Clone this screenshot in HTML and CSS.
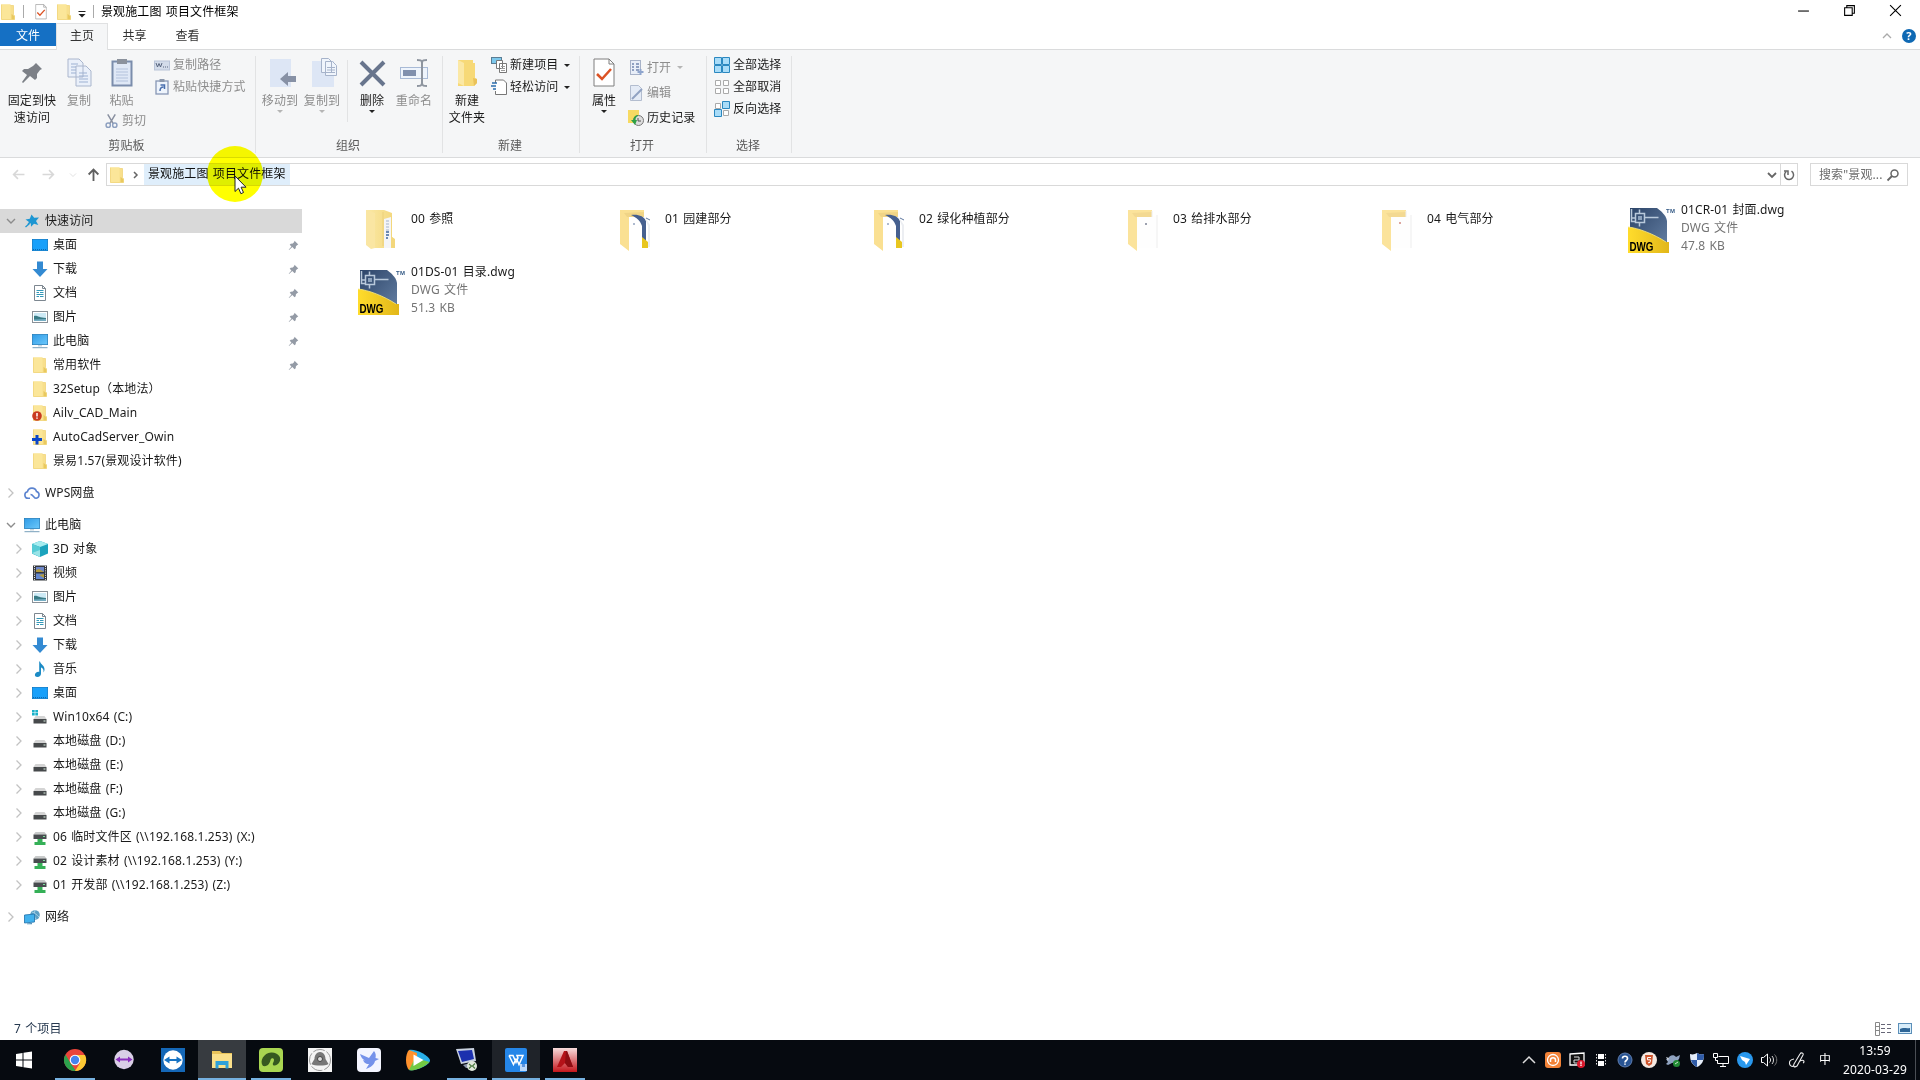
FILE: index.html
```html
<!DOCTYPE html>
<html lang="zh-CN">
<head>
    <meta charset="UTF-8">
    <meta name="viewport" content="width=device-width, initial-scale=1.0">
    <title>景观施工图 项目文件框架</title>
    <link rel="stylesheet" href="styles.css">
</head>
<body>

<svg class="sprite" width="0" height="0">
    <defs>
        <linearGradient id="g-screen" x1="0" y1="0" x2="1" y2="1"><stop offset="0" stop-color="#2f9be6"/><stop offset="1" stop-color="#6cc8fb"/></linearGradient>
        <linearGradient id="g-dwg" x1="0" y1="0" x2="1" y2="1"><stop offset="0" stop-color="#2c4468"/><stop offset="1" stop-color="#6580a4"/></linearGradient>
        <linearGradient id="g-gold" x1="0" y1="0" x2="1" y2="0"><stop offset="0" stop-color="#ffdc2c"/><stop offset="1" stop-color="#e2b71a"/></linearGradient>
        <linearGradient id="g-fold" x1="0" y1="0" x2="1" y2="0"><stop offset="0" stop-color="#fbe9a6"/><stop offset="1" stop-color="#f3d77c"/></linearGradient>
        <linearGradient id="g-red" x1="0" y1="0" x2="0" y2="1"><stop offset="0" stop-color="#f7dcdc"/><stop offset="1" stop-color="#c4161c"/></linearGradient>
    </defs>
    <symbol id="folder" viewBox="0 0 16 16"><path d="M1.5 0.5h9v1h3v10l1 .5v3.500h-13z" fill="#f8df8c"/><path d="M1.500 .5h9v15h-9z" fill="#fbe699"/><path d="M11.500 10l3 2v3.500h-3z" fill="#e9c95f"/><path d="M1.500 .5v15h13v-4l-1-1v-9h-3" fill="none" stroke="#efd170" stroke-width=".7"/></symbol>
    <symbol id="pin" viewBox="0 0 16 16"><path d="M9.500 1l5.500 5.500-1.500.6-2 2-.3 3-1.700 1.400-3.200-3.200L1.500 14.500 1 14.200l4-4.700L2.500 7 4 5.300l3-.3 2-2z" fill="#949ba6"/></symbol>
    <symbol id="star" viewBox="0 0 16 16"><path d="M7.500 1.500l2.700 3.200 4.800-.3-3 3.600 2.300 4-4.300-1.300-3 3-.2-3.500L3 11.500 5 9 1.500 6.500l4.300-.8z" fill="#1d96d2"/><path d="M5.500 10.500L1.500 14" stroke="#1d96d2" stroke-width="1.300"/></symbol>
    <symbol id="desktop" viewBox="0 0 16 16"><rect x=".4" y="2.400" width="15.200" height="11.200" fill="#18a0fa" stroke="#0878c8" stroke-width=".8"/><path d="M1 12.600h14" stroke="#0a64aa" stroke-dasharray="1 1"/></symbol>
    <symbol id="down" viewBox="0 0 16 16"><path d="M5 .5h6v7.500h4.500L8 16 .5 8H5z" fill="#338ad2"/></symbol>
    <symbol id="doc" viewBox="0 0 16 16"><path d="M2.500.5h8l3 3v12h-11z" fill="#fff" stroke="#7d8790"/><path d="M10.500.5v3h3" fill="none" stroke="#7d8790"/><path d="M4.500 5.500h7M4.500 7.500h2.500M8 7.500h3.500M4.500 9.500h7M4.500 11.500h2.500M8 11.500h3.500" stroke="#3498b8"/></symbol>
    <symbol id="picture" viewBox="0 0 16 16"><rect x=".5" y="2.500" width="15" height="11" fill="#fff" stroke="#8a9198"/><path d="M2 4h12v8H2z" fill="#cdeaf6"/><path d="M2 7c3-1 5 2 12 2v3H2z" fill="#397b86"/><path d="M2 10.500l12-.5v2H2z" fill="#75adc3"/></symbol>
    <symbol id="pc" viewBox="0 0 16 16"><rect x=".4" y="1.400" width="15.200" height="10.200" fill="url(#g-screen)" stroke="#2680bd" stroke-width=".8"/><path d="M6 12h4v1.500H6z" fill="#c8d6df"/><path d="M.5 14.700h15" stroke="#779fba" stroke-width="1"/></symbol>
    <symbol id="folder-alert" viewBox="0 0 16 16"><use href="#folder"/><circle cx="5" cy="11" r="4.800" fill="#c83a20"/><path d="M5 8v3.500M5 12.500v1.200" stroke="#fff" stroke-width="1.500"/></symbol>
    <symbol id="folder-plus" viewBox="0 0 16 16"><use href="#folder"/><path d="M3.500 6h3v3h3.500v3H6.500v3.500h-3V12H0V9h3.500z" fill="#0b46c8"/></symbol>
    <symbol id="cloud" viewBox="0 0 16 16"><path d="M6 13.300H4a3.300 3.300 0 0 1-.6-6.500A4.700 4.700 0 0 1 12.500 6.500a3.500 3.500 0 0 1-.3 6.800c-2.500 0-3-4-5.700-3.800" fill="none" stroke="#5b83cf" stroke-width="1.600"/></symbol>
    <symbol id="cube" viewBox="0 0 16 16"><path d="M8 0l8 3v9.500L8 16l-8-3.500V3z" fill="#1ba3bd"/><path d="M0 3l8-3 8 3-8 3z" fill="#a6ecef"/><path d="M0 3l8 3v10l-8-3.500z" fill="#56cbd5"/><path d="M0 12l8-3v7z" fill="#c4f3f3" opacity=".6"/></symbol>
    <symbol id="film" viewBox="0 0 16 16"><rect x="1" y=".5" width="14" height="15" fill="#35383d"/><path d="M4 2h8v5H4z" fill="#6d86c8"/><path d="M4 8.500h8V14H4z" fill="#6387d0"/><path d="M4 5l3-1 5 3H4zM7 10l5-1v4z" fill="#b39a3d"/><path d="M2.500 1v14M13.500 1v14" stroke="#eee" stroke-dasharray="1 1.200"/></symbol>
    <symbol id="music" viewBox="0 0 16 16"><path d="M8 .5c.5 3 5 4 4.500 8.500-.1 1-.5 1.800-1 2.500.5-3-1-4.500-2.500-5v6c0 2-1.500 3.500-3.500 3.500s-3-1.300-2.500-2.700C3.500 11.500 5.500 10.500 7.200 11V.5z" fill="#1c8bc5"/></symbol>
    <symbol id="disk" viewBox="0 0 16 16"><path d="M3.500 7h9l2 3h-13z" fill="#d4d4d4"/><rect x="1.500" y="10" width="13" height="4.500" fill="#46494b"/><path d="M11.500 12h2" stroke="#d9f0e0"/></symbol>
    <symbol id="disk-win" viewBox="0 0 16 16"><use href="#disk"/><path d="M0 1h2.700v2.500H0zM3.300 1H6v2.500H3.300zM0 4h2.700v2.500H0zM3.300 4H6v2.500H3.300z" fill="#19b1c9"/></symbol>
    <symbol id="disk-net" viewBox="0 0 16 16"><path d="M3.500 3h9l2 2.500h-13z" fill="#c8caca"/><rect x="1.500" y="5.500" width="13" height="4.500" fill="#484c4f"/><path d="M11 7.500h2" stroke="#7be09c"/><path d="M5.500 10h5v3h3v3h-11v-3h3z" fill="#35b057"/></symbol>
    <symbol id="network" viewBox="0 0 16 16"><circle cx="11" cy="6" r="4.800" fill="#5c9fc4"/><path d="M8 3c3 1 5 3 7 5M11 1c-1 4-1 7 1 9" fill="none" stroke="#a5d1e8"/><path d="M.5 6l10-1v8l-10 1z" fill="#41b1ed" stroke="#1e70ab" stroke-width=".8"/><path d="M3 14.500l5-.5v1.300H3z" fill="#4c8eb8"/></symbol>
    <symbol id="chev-r" viewBox="0 0 10 10"><path d="M2.500.5L7 5 2.500 9.500" fill="none" stroke="#c2c2c2" stroke-width="1.300"/></symbol>
    <symbol id="chev-d" viewBox="0 0 10 10"><path d="M1 3l4 4 4-4" fill="none" stroke="#8c8c8c" stroke-width="1.400"/></symbol>
    <symbol id="sheet-check" viewBox="0 0 22 30"><path d="M1 1h15l5 5v22H1z" fill="#fff" stroke="#7e7e7e"/><path d="M16 1v5h5" fill="none" stroke="#7e7e7e"/><path d="M4 16l5 5 9-10" fill="none" stroke="#dc5325" stroke-width="2.500"/></symbol>
    <symbol id="dwg" viewBox="0 0 50 48">
        <path d="M3 2h27c4 3 9 7 10 13v28H3z" fill="url(#g-dwg)"/>
        <path d="M1 21c10 1 26 7 38 15h3v11H1z" fill="url(#g-gold)"/>
        <path d="M1 21c10 1 26 7 38 15" fill="none" stroke="#f8e983" stroke-width=".8"/>
        <path d="M4.500 3v9h4M12.500 3.500v4M4.500 12.500v3h4M8.500 7.500h9v9h-9zM17.500 11.500h14M12.500 16.500v4" fill="none" stroke="#b9c9db" stroke-width="1.500"/>
        <path d="M11 10h4v4h-4z" fill="#8da3bd"/>
    </symbol>
    <symbol id="folder-dwg" viewBox="0 0 50 48">
        <path d="M9 4h24v7H18v34l-9-7z" fill="#fae092"/>
        <path d="M13 7l20-1v5H16z" fill="#f0d486"/>
        <path d="M18 11h11l5 7v24H18z" fill="#fff"/>
        <path d="M20 9c7-1 13 1 15 6v22h-4V20c-2-6-5-8-11-11z" fill="#46608f"/>
        <path d="M31 31l6 5v6h-6z" fill="#e8c61f"/>
        <path d="M33 10l6 9v22h-2V20z" fill="#eceef2"/>
        <path d="M22 18h2M35 12l4 2" stroke="#5e779f"/>
    </symbol>
</svg>

<div class="title-bar">
    <svg class="i16"><use href="#folder"/></svg>
    <span class="t-sep"></span>
    <svg class="t-check" viewBox="0 0 22 30"><use href="#sheet-check"/></svg>
    <svg class="i16"><use href="#folder"/></svg>
    <svg class="t-more" viewBox="0 0 8 8"><path d="M.5 1.500h7" stroke="#222"/><path d="M.5 4h7L4 7.500z" fill="#222"/></svg>
    <span class="t-sep"></span>
    <span class="title">景观施工图 项目文件框架</span>
    <div class="window-buttons">
        <svg viewBox="0 0 12 12"><path d="M1 6.500h10" stroke="#000"/></svg>
        <svg viewBox="0 0 12 12"><path d="M1.500 3.500h7v7h-7zM3.500 3.500v-2h7v7h-2" fill="none" stroke="#000"/></svg>
        <svg viewBox="0 0 12 12"><path d="M1 1l10 10M11 1L1 11" stroke="#000"/></svg>
    </div>
</div>

<div class="tabs">
    <span class="tab file">文件</span>
    <span class="tab active">主页</span>
    <span class="tab">共享</span>
    <span class="tab">查看</span>
    <div class="help">
        <svg width="10" height="10" viewBox="0 0 10 10"><path d="M1 7l4-4 4 4" fill="none" stroke="#aaa" stroke-width="1.300"/></svg>
        <span class="help-mark">?</span>
    </div>
</div>

<div class="ribbon">
    <div class="group g-clip">
        <div class="group-body">
            <div class="big w64">
                <svg viewBox="0 0 30 30"><path d="M19 5l6 6-2 1-3 4v4l-2 2-5-4-7 7-1-1 5-7-5-4 2-2h4l5-3z" fill="#7c8087"/></svg>
                <span>固定到快</span><span>速访问</span>
            </div>
            <div class="big off w30">
                <svg viewBox="0 0 30 30"><path d="M4 1h11l4 4v14H4zM12 8h10l5 5v15H12z" fill="#eaf0fa" stroke="#aab6cd"/><path d="M7 6h7M7 9h5M7 12h5M7 15h5M15 15h8M15 18h9M15 21h9M15 24h9" stroke="#9db1d2"/></svg>
                <span>复制</span>
            </div>
            <div class="paste">
                <div class="big off">
                    <svg viewBox="0 0 30 30"><rect x="5.500" y="3.500" width="19" height="24" fill="#dfe8f6" stroke="#7b8dac" stroke-width="2"/><path d="M10 1h10v5H10z" fill="#8b929d"/><path d="M9 11h12M9 14h12M9 17h12M9 20h12M9 23h12" stroke="#b3c2dc"/></svg>
                    <span>粘贴</span>
                </div>
                <div class="small off cut">
                    <svg viewBox="0 0 16 16"><path d="M4 1l6 10M12 1L6 11" stroke="#8990a0" stroke-width="1.600"/><circle cx="4.500" cy="12.500" r="2.300" fill="none" stroke="#8c9fbf" stroke-width="1.500"/><circle cx="11.500" cy="12.500" r="2.300" fill="none" stroke="#8c9fbf" stroke-width="1.500"/></svg>
                    <span>剪切</span>
                </div>
            </div>
            <div class="smalls s-clip">
                <div class="small off"><svg viewBox="0 0 16 16"><rect x=".5" y="4" width="15" height="9" fill="#d3dcea" stroke="#b9c4d8"/><path d="M2 6l1.500 4L5 6.500 6.500 10 8 6M9 10h1M11 10h1M13 10h1" fill="none" stroke="#58657e"/></svg><span>复制路径</span></div>
                <div class="small off"><svg viewBox="0 0 16 16"><rect x="2" y="2" width="12" height="13" fill="#eef4fc" stroke="#8797b5" stroke-width="1.300"/><path d="M5.500 0h5v3h-5z" fill="#8c98ac"/><path d="M6 12c0-3 1-4 3.500-4M6.500 6h4v4" fill="none" stroke="#4a6fae" stroke-width="1.500"/></svg><span>粘贴快捷方式</span></div>
            </div>
        </div>
        <div class="group-label">剪贴板</div>
    </div>

    <div class="group g-org">
        <div class="group-body">
            <div class="big off w42">
                <svg viewBox="0 0 30 30"><path d="M5 1h21v28H5z" fill="#dde6f5"/><path d="M15 21l8-7v4h8v6h-8v4z" fill="#8791a5"/></svg>
                <span>移动到</span><i class="caret"></i>
            </div>
            <div class="big off w42">
                <svg viewBox="0 0 30 30"><path d="M5 3h22v26H5z" fill="#dde6f5"/><path d="M14.500.5h7l3 3v11h-10zM18.500 3.500h7l4 4v10h-11z" fill="#f0f5fc" stroke="#a6b3ca"/><path d="M20 9.500h8M20 12h8M20 14.500h8" stroke="#a6b3ca"/></svg>
                <span>复制到</span><i class="caret"></i>
            </div>
            <div class="thin-sep"></div>
            <div class="big w42">
                <svg viewBox="0 0 30 30"><path d="M4 4l23 23M27 4L4 27" stroke="#68758d" stroke-width="4"/></svg>
                <span>删除</span><i class="caret"></i>
            </div>
            <div class="big off w42">
                <svg viewBox="0 0 30 30"><rect x="1.500" y="9.500" width="27" height="11" fill="#eef4fc" stroke="#a8bad6"/><path d="M4 12h13v6H4z" fill="#8090ae"/><path d="M18 2c3 0 5 0 5 3v20c0 3-2 3-5 3M28 2c-3 0-5 0-5 3v20c0 3 2 3 5 3" fill="none" stroke="#8e959f" stroke-width="2"/></svg>
                <span>重命名</span>
            </div>
        </div>
        <div class="group-label">组织</div>
    </div>

    <div class="group g-new">
        <div class="group-body">
            <div class="big w42">
                <svg viewBox="0 0 30 30"><path d="M6 2h15v3h2v15l2 1v4l-3 3H6z" fill="#f7d977"/><path d="M6 2l6 3v23l-6-3z" fill="#fbe8a5"/><path d="M21 20l4 1v4l-3 3z" fill="#eac25a"/></svg>
                <span>新建</span><span>文件夹</span>
            </div>
            <div class="smalls">
                <div class="small"><svg viewBox="0 0 16 16"><rect x=".5" y=".5" width="10" height="6" fill="#7cc8ec" stroke="#5a7d94"/><path d="M5.500 3.500h6v8h-6zM8.500 6.500h7v9h-7z" fill="#fff" stroke="#777"/><path d="M10 9.500h4M10 11.500h4M10 13.500h4" stroke="#999"/></svg><span>新建项目</span><i class="caret"></i></div>
                <div class="small"><svg viewBox="0 0 16 16"><path d="M4.500 1h8l3 3v11.500h-11V12M4.500 1v3" fill="#fff" stroke="#777"/><path d="M1 4h5M0 7h5M2 10h3" stroke="#2c6fae" stroke-width="1.500"/></svg><span>轻松访问</span><i class="caret"></i></div>
            </div>
        </div>
        <div class="group-label">新建</div>
    </div>

    <div class="group g-open">
        <div class="group-body">
            <div class="big w46">
                <svg viewBox="0 0 22 30"><use href="#sheet-check"/></svg>
                <span>属性</span><i class="caret"></i>
            </div>
            <div class="smalls s-open">
                <div class="small off"><svg viewBox="0 0 16 16"><rect x="2.500" y=".5" width="10" height="14" fill="#e8eef8" stroke="#a7b2c8"/><path d="M4 4h2M4 7h2M4 10h2M8 4h3M8 7h3M8 10h3" stroke="#7287af" stroke-width="1.600"/><path d="M12.500 9v6M9.500 12h6" stroke="#8fa5cd" stroke-width="2"/></svg><span>打开</span><i class="caret"></i></div>
                <div class="small off"><svg viewBox="0 0 16 16"><path d="M2.500.5h8l3 3v12h-11z" fill="#e4ebf6" stroke="#b3bdcf"/><path d="M4 14L14 4" stroke="#91a2c2" stroke-width="2"/></svg><span>编辑</span></div>
                <div class="small"><svg viewBox="0 0 16 16"><path d="M0 0h11v13H0z" fill="#f7da62"/><circle cx="10.500" cy="10.500" r="5" fill="#ddd" stroke="#777"/><path d="M10 8v3h3" fill="none" stroke="#555"/><path d="M10 5C7 5 5 8 5.500 10H3l4 5 2-5H7.500c0-2 1-3.500 2.500-4z" fill="#2fa045"/></svg><span>历史记录</span></div>
            </div>
        </div>
        <div class="group-label">打开</div>
    </div>

    <div class="group g-select">
        <div class="group-body">
            <div class="smalls">
                <div class="small"><svg viewBox="0 0 16 16"><path d="M.5.500h7v7h-7zM8.500.500h7v7h-7zM.5 8.500h7v7h-7zM8.500 8.500h7v7h-7z" fill="#a9dcf8" stroke="#2b88c0"/></svg><span>全部选择</span></div>
                <div class="small"><svg viewBox="0 0 16 16"><path d="M1.500 1.500h5v5h-5zM9.500 1.500h5v5h-5zM1.500 9.500h5v5h-5zM9.500 9.500h5v5h-5z" fill="#fff" stroke="#aaa"/></svg><span>全部取消</span></div>
                <div class="small"><svg viewBox="0 0 16 16"><path d="M1.500 2.500h5v5h-5zM9.500 9.500h5v5h-5z" fill="#fff" stroke="#aaa"/><path d="M8.500.500h7v7h-7zM.500 8.500h7v7h-7z" fill="#a9dcf8" stroke="#2b88c0"/></svg><span>反向选择</span></div>
            </div>
        </div>
        <div class="group-label">选择</div>
    </div>
</div>

<div class="address-row">
    <div class="nav">
        <svg viewBox="0 0 12 12"><path d="M11.500 6H1.500M5.500 2l-4 4 4 4" fill="none" stroke="#d8d8d8" stroke-width="1.500"/></svg>
        <svg viewBox="0 0 12 12"><path d="M.5 6h10M6.500 2l4 4-4 4" fill="none" stroke="#d8d8d8" stroke-width="1.500"/></svg>
        <svg class="recent" viewBox="0 0 8 8"><path d="M1 3l3 3 3-3" fill="none" stroke="#e2e2e2"/></svg>
        <svg viewBox="0 0 12 12"><path d="M6 12V1.500M1.500 6L6 1.500 10.500 6" fill="none" stroke="#606060" stroke-width="1.700"/></svg>
    </div>
    <div class="address">
        <svg class="i16"><use href="#folder"/></svg>
        <svg class="crumb-arrow" viewBox="0 0 10 10"><path d="M3 2l3 3-3 3" fill="none" stroke="#666" stroke-width="1.500"/></svg>
        <span class="crumb">景观施工图 项目文件框架</span>
        <svg class="drop" viewBox="0 0 10 10"><path d="M1 3l4 4 4-4" fill="none" stroke="#666" stroke-width="1.800"/></svg>
        <span class="refresh"><svg viewBox="0 0 12 12"><path d="M3.200 2.500A4.500 4.500 0 1 0 8.500 2.200" fill="none" stroke="#666" stroke-width="1.500"/><path d="M1 2h4v4" fill="none" stroke="#666" stroke-width="1.500"/></svg></span>
    </div>
    <div class="search">
        <span>搜索"景观...</span>
        <svg viewBox="0 0 12 12"><circle cx="7.500" cy="4.500" r="3.500" fill="none" stroke="#666" stroke-width="1.500"/><path d="M5 7L.5 11.500" stroke="#666" stroke-width="1.800"/></svg>
    </div>
</div>

<div class="main">
    <div class="sidebar">
        <div class="row root selected"><svg class="chev"><use href="#chev-d"/></svg><svg class="i16"><use href="#star"/></svg><span>快速访问</span></div>
        <div class="row"><svg class="i16"><use href="#desktop"/></svg><span>桌面</span><svg class="pin"><use href="#pin"/></svg></div>
        <div class="row"><svg class="i16"><use href="#down"/></svg><span>下载</span><svg class="pin"><use href="#pin"/></svg></div>
        <div class="row"><svg class="i16"><use href="#doc"/></svg><span>文档</span><svg class="pin"><use href="#pin"/></svg></div>
        <div class="row"><svg class="i16"><use href="#picture"/></svg><span>图片</span><svg class="pin"><use href="#pin"/></svg></div>
        <div class="row"><svg class="i16"><use href="#pc"/></svg><span>此电脑</span><svg class="pin"><use href="#pin"/></svg></div>
        <div class="row"><svg class="i16"><use href="#folder"/></svg><span>常用软件</span><svg class="pin"><use href="#pin"/></svg></div>
        <div class="row"><svg class="i16"><use href="#folder"/></svg><span>32Setup（本地法）</span></div>
        <div class="row"><svg class="i16"><use href="#folder-alert"/></svg><span>Ailv_CAD_Main</span></div>
        <div class="row"><svg class="i16"><use href="#folder-plus"/></svg><span>AutoCadServer_Owin</span></div>
        <div class="row"><svg class="i16"><use href="#folder"/></svg><span>景易1.57(景观设计软件)</span></div>

        <div class="row root"><svg class="chev"><use href="#chev-r"/></svg><svg class="i16"><use href="#cloud"/></svg><span>WPS网盘</span></div>

        <div class="row root"><svg class="chev"><use href="#chev-d"/></svg><svg class="i16"><use href="#pc"/></svg><span>此电脑</span></div>
        <div class="row"><svg class="chev"><use href="#chev-r"/></svg><svg class="i16"><use href="#cube"/></svg><span>3D 对象</span></div>
        <div class="row"><svg class="chev"><use href="#chev-r"/></svg><svg class="i16"><use href="#film"/></svg><span>视频</span></div>
        <div class="row"><svg class="chev"><use href="#chev-r"/></svg><svg class="i16"><use href="#picture"/></svg><span>图片</span></div>
        <div class="row"><svg class="chev"><use href="#chev-r"/></svg><svg class="i16"><use href="#doc"/></svg><span>文档</span></div>
        <div class="row"><svg class="chev"><use href="#chev-r"/></svg><svg class="i16"><use href="#down"/></svg><span>下载</span></div>
        <div class="row"><svg class="chev"><use href="#chev-r"/></svg><svg class="i16"><use href="#music"/></svg><span>音乐</span></div>
        <div class="row"><svg class="chev"><use href="#chev-r"/></svg><svg class="i16"><use href="#desktop"/></svg><span>桌面</span></div>
        <div class="row"><svg class="chev"><use href="#chev-r"/></svg><svg class="i16"><use href="#disk-win"/></svg><span>Win10x64 (C:)</span></div>
        <div class="row"><svg class="chev"><use href="#chev-r"/></svg><svg class="i16"><use href="#disk"/></svg><span>本地磁盘 (D:)</span></div>
        <div class="row"><svg class="chev"><use href="#chev-r"/></svg><svg class="i16"><use href="#disk"/></svg><span>本地磁盘 (E:)</span></div>
        <div class="row"><svg class="chev"><use href="#chev-r"/></svg><svg class="i16"><use href="#disk"/></svg><span>本地磁盘 (F:)</span></div>
        <div class="row"><svg class="chev"><use href="#chev-r"/></svg><svg class="i16"><use href="#disk"/></svg><span>本地磁盘 (G:)</span></div>
        <div class="row"><svg class="chev"><use href="#chev-r"/></svg><svg class="i16"><use href="#disk-net"/></svg><span>06 临时文件区 (\\192.168.1.253) (X:)</span></div>
        <div class="row"><svg class="chev"><use href="#chev-r"/></svg><svg class="i16"><use href="#disk-net"/></svg><span>02 设计素材 (\\192.168.1.253) (Y:)</span></div>
        <div class="row"><svg class="chev"><use href="#chev-r"/></svg><svg class="i16"><use href="#disk-net"/></svg><span>01 开发部 (\\192.168.1.253) (Z:)</span></div>

        <div class="row root"><svg class="chev"><use href="#chev-r"/></svg><svg class="i16"><use href="#network"/></svg><span>网络</span></div>
    </div>

    <div class="files">
        <div class="item folder">
            <svg class="thumb" viewBox="0 0 50 48"><path d="M9 4h18l8 3v24l3 2v9H14z" fill="url(#g-fold)"/><path d="M27 13l7-2v31h-7z" fill="#f4f5f7"/><path d="M29 15h3M29 18h3M29 21h3M29 24h3" stroke="#a5b4cb"/><path d="M29 26h3M29 29h3M29 32h2" stroke="#3f659d" stroke-width="1.600"/><path d="M34 10v31h3v-8l-2-2V9z" fill="#f3d77c"/><path d="M9 4l9 3v35l-4 1-5-4z" fill="#fae6a3"/><path d="M26 6v34" stroke="#ecd07a"/></svg>
            <div class="info"><span>00 参照</span></div>
        </div>
        <div class="item folder">
            <svg class="thumb"><use href="#folder-dwg"/></svg>
            <div class="info"><span>01 园建部分</span></div>
        </div>
        <div class="item folder">
            <svg class="thumb"><use href="#folder-dwg"/></svg>
            <div class="info"><span>02 绿化种植部分</span></div>
        </div>
        <div class="item folder">
            <svg class="thumb" viewBox="0 0 50 48"><path d="M9 4h24v7H18v34l-9-7z" fill="#fbe39b"/><path d="M13 7l20-1v5H16z" fill="#f3d992"/><path d="M18 11h15l6-2v33H18z" fill="#fefefe"/><path d="M33 5v6M38 9v33" stroke="#eee"/><path d="M26 18h2" stroke="#7b8294" stroke-width="1.500"/></svg>
            <div class="info"><span>03 给排水部分</span></div>
        </div>
        <div class="item folder">
            <svg class="thumb" viewBox="0 0 50 48"><path d="M9 4h24v7H18v34l-9-7z" fill="#fbe39b"/><path d="M13 7l20-1v5H16z" fill="#f3d992"/><path d="M18 11h15l6-2v33H18z" fill="#fefefe"/><path d="M33 5v6M38 9v33" stroke="#eee"/><path d="M26 17h2" stroke="#d08a80" stroke-width="1.500"/></svg>
            <div class="info"><span>04 电气部分</span></div>
        </div>
        <div class="item">
            <svg class="thumb" viewBox="0 0 50 48"><use href="#dwg"/><text x="2.500" y="44.500" textLength="24" lengthAdjust="spacingAndGlyphs" class="dwg-text">DWG</text><text x="39" y="7" textLength="9" class="tm-text">TM</text></svg>
            <div class="info"><span>01CR-01 封面.dwg</span><span class="dim">DWG 文件</span><span class="dim">47.8 KB</span></div>
        </div>
        <div class="item">
            <svg class="thumb" viewBox="0 0 50 48"><use href="#dwg"/><text x="2.500" y="44.500" textLength="24" lengthAdjust="spacingAndGlyphs" class="dwg-text">DWG</text><text x="39" y="7" textLength="9" class="tm-text">TM</text></svg>
            <div class="info"><span>01DS-01 目录.dwg</span><span class="dim">DWG 文件</span><span class="dim">51.3 KB</span></div>
        </div>
    </div>
</div>

<div class="status">
    <span>7 个项目</span>
    <div class="views">
        <svg viewBox="0 0 16 16"><path d="M.5 1.500h4v13h-4zM.5 5.500h4M.5 9.500h4" fill="#fff" stroke="#888"/><path d="M6 3.500h4M12 3.500h4M6 7.500h4M12 7.500h4M6 11.500h4M12 11.500h4" stroke="#667"/></svg>
        <svg viewBox="0 0 16 16"><rect x="1.500" y="2.500" width="13" height="10" fill="#d8edfa" stroke="#5b8fb9"/><path d="M3 8c4-2 6 0 10-1v4H3z" fill="#2e6596"/></svg>
    </div>
</div>

<div class="taskbar">
    <div class="app"><svg viewBox="0 0 24 24"><path d="M4 6l6.500-1v6.500H4zM11.500 4.800L20 3.500v8h-8.500zM4 12.500h6.500V19L4 18zM11.500 12.500H20v8l-8.500-1.300z" fill="#fff"/></svg></div>
    <div class="app open"><svg viewBox="0 0 24 24"><circle cx="12" cy="12" r="11" fill="#e9453a"/><path d="M2.500 6.500L8 16l5 7A11 11 0 0 1 2.500 6.500z" fill="#2ba24c"/><path d="M12 7h10a11 11 0 0 1-10 16l5-8z" fill="#fcc934"/><circle cx="12" cy="12" r="5.300" fill="#fff"/><circle cx="12" cy="12" r="4.200" fill="#4584ee"/></svg></div>
    <div class="app"><svg viewBox="0 0 24 24"><circle cx="12" cy="11.500" r="9.700" fill="#d9cfe6"/><path d="M3.500 11.500L8 8.500v2h8v-2l4.500 3-4.500 3v-2H8v2z" fill="#8b30bd"/></svg></div>
    <div class="app"><svg viewBox="0 0 24 24"><rect width="24" height="24" fill="#1467b7"/><circle cx="12" cy="12" r="9.700" fill="#fff"/><path d="M3 12l5.500-3.500v2.500h7V8.500L21 12l-5.500 3.500V13h-7v2.500z" fill="#1673c4"/></svg></div>
    <div class="app open active"><svg viewBox="0 0 24 24"><path d="M2 3h8l2 2h10v15H2z" fill="#e9c35a"/><path d="M2 6h20v14H2z" fill="#fbe08b"/><path d="M5.500 13h13v7.500h-3V17h-7v3.500h-3z" fill="#2fa1da"/></svg></div>
    <div class="app open"><svg viewBox="0 0 24 24"><rect x="0" y="0" width="24" height="24" rx="4" fill="#a9d651"/><path d="M4 18C0 13 5 5 12 4.500c7-.5 11 5 8.500 9.500-1.500 3-5 4.500-6.500 3-1-1.500 1-3 1-5 0-2.500-3-2.500-3.500 0-.5 3-2.500 7-7.500 6z" fill="#365820"/></svg></div>
    <div class="app"><svg viewBox="0 0 24 24"><rect width="24" height="24" fill="#f4f4f4"/><circle cx="12" cy="12" r="10.500" fill="none" stroke="#999" stroke-dasharray="12 2"/><path d="M12 4c4 0 5.500 4 5.500 7l3 5c-3 2-14 2-17 0l3-5c0-3 1.500-7 5.500-7z" fill="#777"/><circle cx="12" cy="11" r="2.500" fill="#ddd" stroke="#444"/></svg></div>
    <div class="app"><svg viewBox="0 0 24 24"><rect width="24" height="24" rx="4" fill="#f3f5ff"/><path d="M3 6l9 4 5-7c2 2 2 5 1.500 7L22 11l-4 2c-1 4-4 6-9 8l3-5c-4 0-5-2-6-4l2 .5C5 11 4 9 3 6z" fill="#7592ea"/></svg></div>
    <div class="app"><svg viewBox="0 0 24 24"><path d="M3 2c5-2 20 5 21 10S8 24 3 22z" fill="#29afe8"/><path d="M3 2c-4 4-4 16 0 20l8-4V5z" fill="#ff922d"/><path d="M3 22c5 2 17-4 20.500-8L9 10z" fill="#73c943"/><path d="M7.500 6.500l10 5.500-10 6z" fill="#fff"/></svg></div>
    <div class="app open"><svg viewBox="0 0 24 24"><path d="M1 1l18-1 2 13-15 3z" fill="#c8d1df"/><path d="M3 3l14-1 2 9-12 3z" fill="#1c30ae"/><path d="M8 17l7-2 1 5H11z" fill="#8b96aa"/><circle cx="17" cy="18" r="5" fill="#e1e8dc"/><path d="M14 16l2.500 2-2.500 2.500M20 15.500L17.500 18l2.500 2.500" fill="none" stroke="#4d7b41" stroke-width="1.200"/></svg></div>
    <div class="app open lit"><svg viewBox="0 0 24 24"><rect x="1" y="0" width="22" height="24" rx="2" fill="#2586e8"/><path d="M5 7.500h4l3 7 2-4.500-1-2.500h6l-4 9-2.500-6M5 7.500l4.500 9 2.500-6" fill="none" stroke="#fff" stroke-width="1.500"/><path d="M16 16h7v7h-7z" fill="#bcd9fb"/><path d="M18 16h3v3h-3z" fill="#5c95df"/></svg></div>
    <div class="app open"><svg viewBox="0 0 24 24"><rect width="24" height="24" fill="url(#g-red)"/><path d="M4 19L11 3h3l6 16h-5l-3-4-4 4z" fill="#b41218"/><path d="M12 15l1-12h1l6 16h-5z" fill="#8c0d12"/></svg></div>

    <div class="tray">
        <svg viewBox="0 0 16 16"><path d="M2 11l6-6 6 6" fill="none" stroke="#ddd" stroke-width="1.500"/></svg>
        <svg viewBox="0 0 16 16"><rect width="16" height="16" rx="3" fill="#f18237"/><circle cx="8" cy="8" r="5.500" fill="none" stroke="#fff" stroke-width="1.300"/><path d="M5.500 10V8c0-3 5-3 5 0v2" fill="none" stroke="#fff" stroke-width="1.500"/></svg>
        <svg viewBox="0 0 16 16"><path d="M1 2l14-1v12H1z" fill="#111" stroke="#fff" stroke-width="1.300"/><path d="M5 5h5v3H5v3h5" fill="none" stroke="#ddd"/><circle cx="12" cy="12" r="4" fill="#d9182c"/><path d="M12 9.500v3M12 13v1" stroke="#fff" stroke-width="1.300"/></svg>
        <svg viewBox="0 0 16 16"><path d="M5 2h6v5H5zM5 9h6v5H5z" fill="#fff"/><path d="M3.500 2v12M12.500 2v12" stroke="#ddd" stroke-dasharray="1.500 1.500"/></svg>
        <svg viewBox="0 0 16 16"><circle cx="8" cy="8" r="7" fill="#285493" stroke="#607eaf"/><path d="M5.500 6.500c0-3 5-3 5 0 0 2-2.500 2-2.500 4M8 11.500v1.300" fill="none" stroke="#fff" stroke-width="1.700"/></svg>
        <svg viewBox="0 0 16 16"><circle cx="8" cy="8" r="8" fill="#f4e9e2"/><path d="M4 3h8l-1 9-3 2-3-2z" fill="#ce552d"/><path d="M10 5.500H6.500v2.300h3L9 10.500l-2 .3" fill="none" stroke="#fff"/></svg>
        <svg viewBox="0 0 16 16"><path d="M3 7c1-4 6-5 8-2l4-2-1 4-3 3-4 1-4 2-2-1 2-2-2-3z" fill="#8fa3c0"/><path d="M1 5l3 1-1 3z" fill="#c8ced7"/><circle cx="11.500" cy="11.500" r="3.500" fill="#238b35"/><path d="M10 12l3-2" stroke="#c8e8cd"/></svg>
        <svg viewBox="0 0 16 16"><path d="M1 2c3 1 5 0 7-1 2 1 4 2 7 1 0 7-2 11-7 13-5-2-7-6-7-13z" fill="#e4edfa"/><path d="M8 1c2 1 4 2 7 1 0 3 0 4-1 6H8zM2 8h6v7c-4-2-5-4-6-7z" fill="#305ca8"/></svg>
        <svg viewBox="0 0 16 16"><path d="M5.500 4.500h10v7h-11V8M7 14.500h6M10 11.500v3M.5 1.500h4v4h-4zM2.500 5.500v3h2" fill="none" stroke="#fff"/></svg>
        <svg viewBox="0 0 16 16"><circle cx="8" cy="8" r="8" fill="#2998ed"/><path d="M3 4l10 3-4 6-1-3-3-2z" fill="#fff"/></svg>
        <svg viewBox="0 0 16 16"><path d="M.5 5.500h2l4-3.500v12l-4-3.500h-2z" fill="none" stroke="#fff"/><path d="M8.500 5.500c1.500 1.500 1.500 3.500 0 5M11 4c2 2 2 6 0 8" fill="none" stroke="#ddd"/><path d="M13.500 2.500c3 3 3 8 0 11" fill="none" stroke="#777"/></svg>
        <svg class="pen" viewBox="0 0 16 16"><path d="M5 12L11 2c1-2 4-1 3 1L8 14c-3 2-4 0-3-2zM5 7c-7 1-5 9 0 7M11 9c4-2 5 1 3 2" fill="none" stroke="#eee" stroke-width="1.100"/></svg>
        <span class="ime">中</span>
        <div class="clock"><span>13:59</span><span>2020-03-29</span></div>
    </div>
</div>

<div class="click-spot"></div>
<svg class="cursor" viewBox="0 0 14 20"><path d="M1 1v15.500l3.500-3.300 2.400 5.500 2.600-1.200-2.400-5.300H12z" fill="#fff" stroke="#222"/></svg>

</body>
</html>
```
FILE: styles.css
```css
* {
    box-sizing: border-box;
}

body {
    margin: 0;
    width: 1920px;
    height: 1080px;
    display: flex;
    flex-direction: column;
    overflow: hidden;
    background: #fff;
    font-family: "Noto Sans", "Noto Sans CJK SC", sans-serif;
    font-size: 12px;
    line-height: 18px;
    letter-spacing: 0.12px;
    word-spacing: 1px;
    color: #1a1a1a;
}

svg {
    display: block;
    flex: none;
    overflow: visible;
}

span {
    white-space: nowrap;
}

.sprite {
    position: absolute;
}

.i16 {
    width: 16px;
    height: 16px;
}

/* title bar */
.title-bar {
    height: 23px;
    display: flex;
    align-items: center;
    color: #000;
}

.t-sep {
    width: 1px;
    height: 13px;
    margin-left: 7px;
    background: #aaa;
}

.t-check {
    width: 12px;
    height: 16px;
    margin: 0 9px 0 11px;
}

.t-more {
    width: 8px;
    height: 8px;
    margin: 4px 0 0 6px;
}

.title {
    margin-left: 7px;
}

.window-buttons {
    margin: 0 18px 3px auto;
    display: flex;
    gap: 33px;
}

.window-buttons svg {
    width: 13px;
    height: 13px;
}

/* tabs */
.tabs {
    height: 27px;
    display: flex;
    border-bottom: 1px solid #dadbdc;
}

.tab {
    width: 53px;
    height: 23px;
    line-height: 25px;
    text-align: center;
    color: #333;
}

.tab.file {
    width: 56px;
    background: #1570c4;
    color: #fff;
}

.tab.active {
    width: 52px;
    height: 27px;
    line-height: 24px;
    background: #f5f6f7;
    border: 1px solid #e0e1e2;
    border-bottom: none;
}

.help {
    margin: 5px 4px 0 auto;
    height: 15px;
    display: flex;
    align-items: center;
    gap: 10px;
}

.help-mark {
    width: 14px;
    height: 14px;
    border-radius: 7px;
    background: #0f69b4;
    color: #fff;
    font-weight: bold;
    font-size: 11px;
    line-height: 14px;
    text-align: center;
}

/* ribbon */
.ribbon {
    height: 108px;
    display: flex;
    padding-top: 6px;
    background: #f5f6f7;
    border-bottom: 1px solid #dadbdc;
}

.group {
    height: 97px;
    display: flex;
    flex-direction: column;
    justify-content: space-between;
    border-right: 1px solid #e2e3e4;
}

.g-clip { width: 256px; }
.g-org { width: 187px; }
.g-new { width: 137px; }
.g-open { width: 127px; }
.g-select { width: 85px; }

.group-body {
    display: flex;
}

.group-label {
    padding-right: 2px;
    text-align: center;
    color: #5a5a5a;
    line-height: 14px;
}

.big {
    display: flex;
    flex-direction: column;
    align-items: center;
    padding-top: 2px;
    line-height: 17px;
}

.big svg {
    width: 30px;
    height: 30px;
    margin-bottom: 4px;
}

.big .caret {
    margin-top: 1px;
}

.off {
    color: #8d8d8d;
}

.w64 { width: 64px; }
.w30 { width: 30px; }
.w42 { width: 42px; }
.w46 { width: 46px; }

.g-org .group-body {
    padding-left: 3px;
}

.g-org .thin-sep {
    width: 1px;
    height: 62px;
    margin: 4px 3px 0 4px;
    background: #e2e3e4;
}

.g-new .group-body {
    padding-left: 3px;
}

.g-open .group-body {
    padding-left: 1px;
}

.paste {
    width: 55px;
}

.small {
    display: flex;
    align-items: center;
    height: 22px;
    gap: 3px;
}

.small svg {
    width: 16px;
    height: 16px;
}

.small.cut {
    height: 18px;
    padding-left: 10px;
    margin-top: 3px;
}

.cut svg {
    width: 15px;
}

.smalls {
    padding-left: 3px;
    margin-top: -2px;
}

.s-clip {
    padding-left: 5px;
}

.s-open {
    padding-left: 1px;
    margin-top: -1px;
}

.s-open .small {
    height: 25px;
}

.g-select .smalls {
    padding-left: 7px;
}

.caret {
    border: 3px solid transparent;
    border-top-color: #222;
    border-bottom: none;
}

.small .caret {
    margin-left: 3px;
}

.off .caret {
    border-top-color: #b5b5b5;
}

/* address row */
.address-row {
    height: 33px;
    display: flex;
    padding: 5px 12px 0 0;
}

.nav {
    width: 106px;
    height: 23px;
    display: flex;
    align-items: center;
    padding-left: 12px;
}

.nav svg {
    width: 13px;
    height: 13px;
    margin-right: 17px;
}

.nav .recent {
    width: 8px;
    margin-right: 10px;
    margin-left: -3px;
}

.address {
    width: 1692px;
    height: 23px;
    display: flex;
    align-items: center;
    border: 1px solid #d9d9d9;
    padding-left: 2px;
}

.crumb-arrow {
    width: 10px;
    height: 10px;
    margin: 0 4px 0 6px;
}

.crumb {
    height: 21px;
    line-height: 20px;
    padding: 0 4px;
    background: #dfeefb;
    margin-left: -1px;
    color: #111;
}

.drop {
    width: 10px;
    height: 10px;
    margin: 0 3px 0 auto;
}

.refresh {
    height: 21px;
    width: 17px;
    border-left: 1px solid #d9d9d9;
    display: flex;
    align-items: center;
    justify-content: center;
}

.refresh svg {
    width: 12px;
    height: 12px;
}

.search {
    margin-left: auto;
    width: 98px;
    height: 23px;
    border: 1px solid #d9d9d9;
    display: flex;
    align-items: center;
    justify-content: space-between;
    padding: 0 8px;
    color: #6d6d6d;
}

.search svg {
    width: 12px;
    height: 12px;
}

/* folder tree and files */
.main {
    height: 823px;
    display: flex;
}

.sidebar {
    width: 302px;
    padding-top: 18px;
}

.row {
    height: 24px;
    display: flex;
    align-items: center;
    padding-left: 32px;
    gap: 5px;
}

.chev {
    width: 10px;
    height: 10px;
    margin-right: 3px;
}

.row:has(.chev) {
    padding-left: 14px;
}

.row.root {
    padding-left: 6px;
    margin-top: 8px;
}

.row.root.selected {
    margin-top: 0;
    background: #d9d9d9;
}

.pin {
    width: 11px;
    height: 11px;
    margin: 0 3px 0 auto;
}

.files {
    padding: 10px 0 0 51px;
    display: grid;
    grid-template-columns: repeat(6, 254px);
    grid-auto-rows: 62px;
}

.item {
    display: flex;
}

.thumb {
    width: 50px;
    height: 48px;
    margin: 5px 3px 0 4px;
}

.dwg-text {
    font: bold 12px "Liberation Sans", sans-serif;
    letter-spacing: 0;
}

.tm-text {
    font: bold 6px "Liberation Sans", sans-serif;
    letter-spacing: 0;
    fill: #365b86;
}

.info {
    padding-left: 1px;
    display: flex;
    flex-direction: column;
}

.folder .info {
    padding-top: 9px;
}

.dim {
    color: #747474;
}

/* status bar */
.status {
    height: 26px;
    display: flex;
    align-items: center;
    justify-content: space-between;
    padding: 3px 7px 0 14px;
    color: #26384f;
}

.views {
    display: flex;
    gap: 6px;
}

.views svg {
    width: 16px;
    height: 16px;
}

/* taskbar */
.taskbar {
    height: 40px;
    display: flex;
    background: #060a10;
}

.app {
    width: 48px;
    height: 40px;
    margin-right: 1px;
    display: flex;
    align-items: center;
    justify-content: center;
}

.app svg {
    width: 24px;
    height: 24px;
}

.app:first-child {
    margin-right: 3px;
}

.app.open {
    background: linear-gradient(#76b1e0, #76b1e0) center bottom / 40px 2px no-repeat;
}

.app.active {
    background: linear-gradient(#76b1e0, #76b1e0) center bottom / 48px 2px no-repeat #373b40;
}

.app.lit {
    background: linear-gradient(#76b1e0, #76b1e0) center bottom / 48px 2px no-repeat #1f2329;
}

.tray {
    margin-left: auto;
    display: flex;
    align-items: center;
    gap: 8px;
    color: #fff;
}

.tray svg {
    width: 16px;
    height: 16px;
}

.tray .pen {
    margin-left: 4px;
}

.ime {
    margin-left: 6px;
    width: 12px;
}

.clock {
    height: 40px;
    width: 81px;
    margin: 0 4px 0 -4px;
    padding-top: 1px;
    display: flex;
    flex-direction: column;
    align-items: center;
    line-height: 19px;
    border-right: 1px solid #4a4e54;
}

/* mouse pointer with its highlight */
.click-spot {
    position: absolute;
    left: 207px;
    top: 146px;
    width: 56px;
    height: 56px;
    border-radius: 50%;
    background: #ffff00;
    mix-blend-mode: multiply;
}

.cursor {
    position: absolute;
    left: 234px;
    top: 175px;
    width: 14px;
    height: 20px;
}
```
